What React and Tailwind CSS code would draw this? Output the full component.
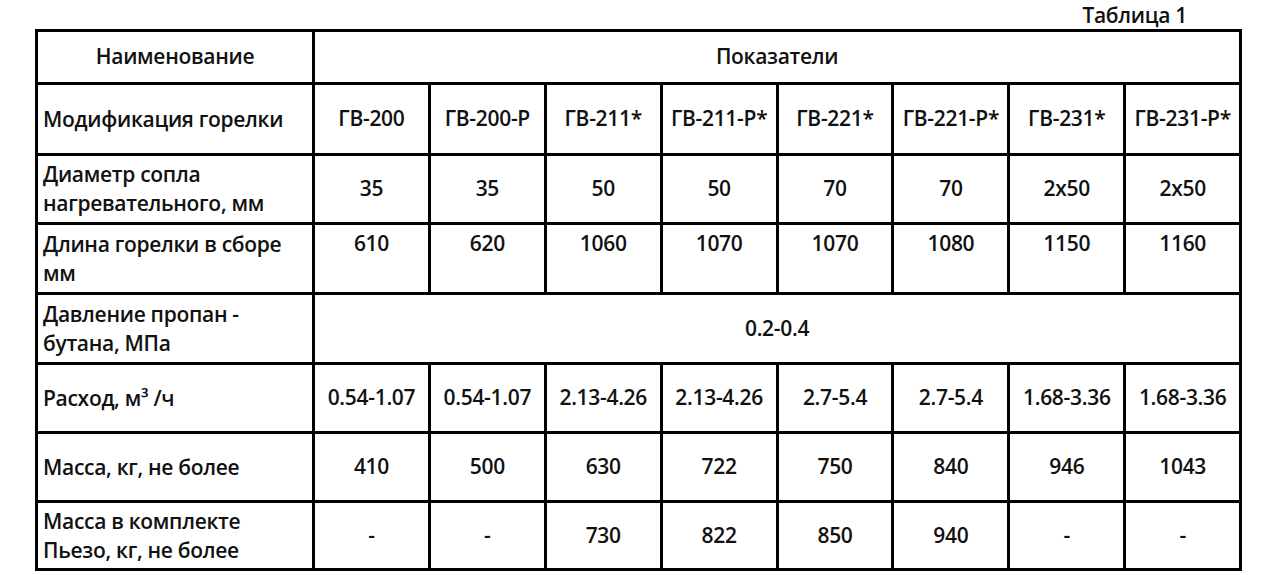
const models = ["ГВ-200", "ГВ-200-Р", "ГВ-211*", "ГВ-211-Р*", "ГВ-221*", "ГВ-221-Р*", "ГВ-231*", "ГВ-231-Р*"];

const rows = [
  {
    label: ["Диаметр сопла", "нагревательного, мм"],
    values: ["35", "35", "50", "50", "70", "70", "2x50", "2x50"],
    h: "h-[69px]",
  },
  {
    label: ["Длина горелки в сборе", "мм"],
    values: ["610", "620", "1060", "1070", "1070", "1080", "1150", "1160"],
    h: "h-[70px]",
    top: true,
  },
];

const rowsBottom = [
  {
    label: ["Расход, м³ /ч"],
    values: ["0.54-1.07", "0.54-1.07", "2.13-4.26", "2.13-4.26", "2.7-5.4", "2.7-5.4", "1.68-3.36", "1.68-3.36"],
    h: "h-[69px]",
  },
  {
    label: ["Масса, кг, не более"],
    values: ["410", "500", "630", "722", "750", "840", "946", "1043"],
    h: "h-[69px]",
  },
  {
    label: ["Масса в комплекте", "Пьезо, кг, не более"],
    values: ["-", "-", "730", "822", "850", "940", "-", "-"],
    h: "h-[68px]",
  },
];

function Label({ lines }) {
  return (
    <td className="border-[3px] border-black px-[5px] align-middle text-left leading-[29px] whitespace-nowrap">
      {lines.map((l) => (
        <div key={l}>{l}</div>
      ))}
    </td>
  );
}

function DataRow({ row }) {
  return (
    <tr className={row.h}>
      <Label lines={row.label} />
      {row.values.map((v, i) => (
        <td
          key={i}
          className={`border-[3px] border-black text-center whitespace-nowrap ${
            row.top ? "align-top pt-[3px]" : "align-middle"
          }`}
        >
          {v}
        </td>
      ))}
    </tr>
  );
}

export default function App() {
  return (
    <div
      className="w-[1280px] h-[575px] overflow-hidden bg-white text-[#111] text-[21px] font-semibold tracking-[-0.3px]"
      style={{ fontFamily: '"Open Sans", "Noto Sans", sans-serif' }}
    >
      <div className="ml-[35px] w-[1204px]">
        <div className="h-[29px] pr-[52px] text-right leading-[30px]">Таблица 1</div>

        <table className="w-[1204px] table-fixed border-collapse border-[3px] border-black">
          <colgroup>
            <col className="w-[277px]" />
            {models.map((m) => (
              <col key={m} className="w-[115.9px]" />
            ))}
          </colgroup>
          <tbody>
            <tr className="h-[53px]">
              <td className="border-[3px] border-black text-center align-middle">Наименование</td>
              <td colSpan={8} className="border-[3px] border-black text-center align-middle">
                Показатели
              </td>
            </tr>

            <tr className="h-[71px]">
              <Label lines={["Модификация горелки"]} />
              {models.map((m) => (
                <td key={m} className="border-[3px] border-black text-center align-middle whitespace-nowrap">
                  {m}
                </td>
              ))}
            </tr>

            {rows.map((r) => (
              <DataRow key={r.label[0]} row={r} />
            ))}

            <tr className="h-[70px]">
              <Label lines={["Давление пропан -", "бутана, МПа"]} />
              <td colSpan={8} className="border-[3px] border-black text-center align-middle">
                0.2-0.4
              </td>
            </tr>

            {rowsBottom.map((r) => (
              <DataRow key={r.label[0]} row={r} />
            ))}
          </tbody>
        </table>
      </div>
    </div>
  );
}
